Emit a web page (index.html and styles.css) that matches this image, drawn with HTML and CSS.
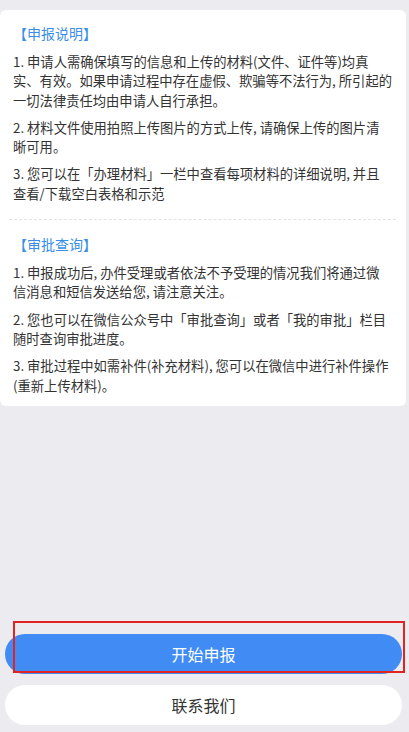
FILE: index.html
```html
<!DOCTYPE html>
<html lang="zh-CN">
<head>
  <meta charset="UTF-8">
  <title>申报说明</title>
  <meta name="viewport" content="width=device-width, initial-scale=1.0">
  <link rel="stylesheet" href="styles.css">
</head>
<body>
  <div class="page">
    <div class="card">
      <h3 class="title">【申报说明】</h3>
      <p>1. 申请人需确保填写的信息和上传的材料(文件、证件等)均真实、有效。如果申请过程中存在虚假、欺骗等不法行为, 所引起的一切法律责任均由申请人自行承担。</p>
      <p>2. 材料文件使用拍照上传图片的方式上传, 请确保上传的图片清晰可用。</p>
      <p>3. 您可以在「办理材料」一栏中查看每项材料的详细说明, 并且查看/下载空白表格和示范</p>

      <div class="divider"></div>

      <h3 class="title">【审批查询】</h3>
      <p>1. 申报成功后, 办件受理或者依法不予受理的情况我们将通过微信消息和短信发送给您, 请注意关注。</p>
      <p>2. 您也可以在微信公众号中「审批查询」或者「我的审批」栏目随时查询审批进度。</p>
      <p>3. 审批过程中如需补件(补充材料), 您可以在微信中进行补件操作(重新上传材料)。</p>
    </div>

    <div class="actions">
      <div class="btn-wrap">
        <button class="btn btn-primary">开始申报</button>
        <div class="highlight"></div>
      </div>
      <button class="btn btn-plain">联系我们</button>
    </div>
  </div>
</body>
</html>
```

FILE: styles.css
```css
body {
  margin: 0;
  background-color: #ebebf0;
  font-family: "Noto Sans CJK SC", "Noto Sans", sans-serif;
  color: #333;
}
.page {
  height: 732px;
  display: flex;
  flex-direction: column;
  box-sizing: border-box;
  padding: 10px 0 7px 0;
}
.card {
  margin-right: 3px;
  background: #fff;
  border-radius: 6px;
  padding: 13px 14px 11px 13px;
}
.title {
  margin: 0 0 9px 0;
  font-size: 14px;
  font-weight: normal;
  line-height: 20px;
  color: #3a8ee6;
}
.card p {
  margin: 0 0 8px 0;
  font-size: 13.3px;
  line-height: 19.3px;
  color: #333;
}
.card p:last-child {
  margin-bottom: 0;
}
.divider {
  border-top: 1px dashed #e2e2e2;
  margin: 16px -4px 14px -4px;
}
.actions {
  margin-top: auto;
  display: flex;
  flex-direction: column;
  gap: 11px;
  padding: 0 7px 0 5px;
}
.btn-wrap {
  position: relative;
}
.btn {
  display: block;
  width: 100%;
  height: 40px;
  border: none;
  border-radius: 20px;
  font-family: inherit;
  font-size: 16px;
  cursor: pointer;
}
.btn-primary {
  background: #418cf4;
  color: #fff;
}
.btn-plain {
  background: #fff;
  color: #333;
}
.highlight {
  position: absolute;
  left: 8px;
  top: -13px;
  right: -3px;
  bottom: 1px;
  border: 2px solid #e3231f;
  pointer-events: none;
}
```
